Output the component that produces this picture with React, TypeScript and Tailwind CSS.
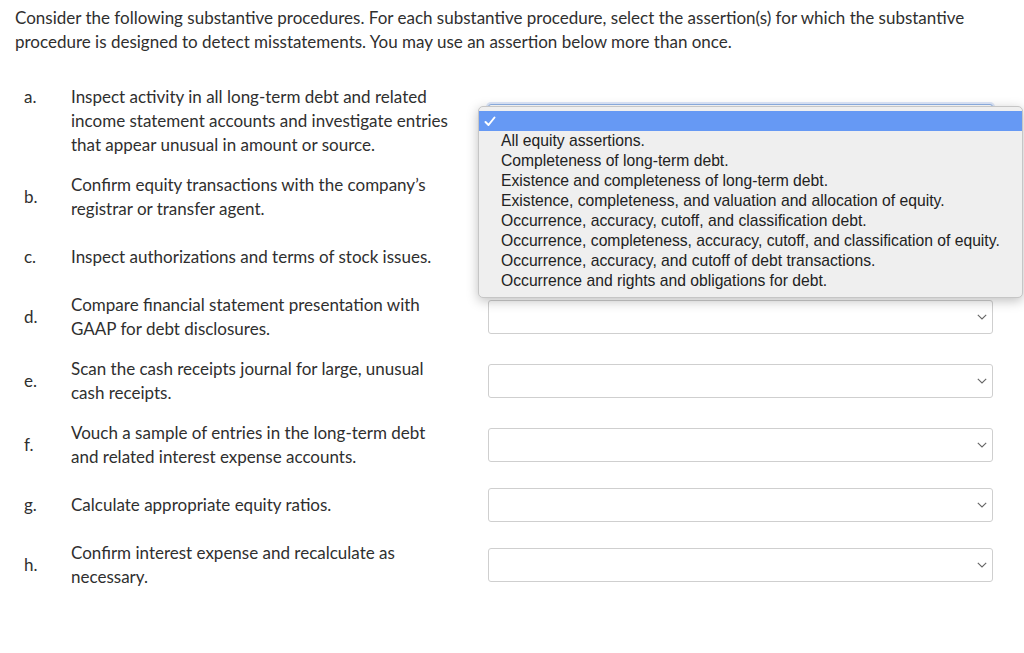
import React from 'react';

const rows = [
  { label: 'a.', text: 'Inspect activity in all long-term debt and related income statement accounts and investigate entries that appear unusual in amount or source.', top: true, focused: true },
  { label: 'b.', text: 'Confirm equity transactions with the company’s registrar or transfer agent.' },
  { label: 'c.', text: 'Inspect authorizations and terms of stock issues.' },
  { label: 'd.', text: 'Compare financial statement presentation with GAAP for debt disclosures.' },
  { label: 'e.', text: 'Scan the cash receipts journal for large, unusual cash receipts.' },
  { label: 'f.', text: 'Vouch a sample of entries in the long-term debt and related interest expense accounts.' },
  { label: 'g.', text: 'Calculate appropriate equity ratios.' },
  { label: 'h.', text: 'Confirm interest expense and recalculate as necessary.' },
];

const options = [
  'All equity assertions.',
  'Completeness of long-term debt.',
  'Existence and completeness of long-term debt.',
  'Existence, completeness, and valuation and allocation of equity.',
  'Occurrence, accuracy, cutoff, and classification debt.',
  'Occurrence, completeness, accuracy, cutoff, and classification of equity.',
  'Occurrence, accuracy, and cutoff of debt transactions.',
  'Occurrence and rights and obligations for debt.',
];

function SelectBox({ focused }: { focused?: boolean }) {
  return (
    <div className="h-10 flex items-center">
      <div
        className={
          focused
            ? 'w-[505px] h-[34px] bg-white rounded-[3px] border border-[#8fb2e6] shadow-[0_0_0_2px_rgba(120,160,230,0.25)] flex items-center justify-end pr-[5px]'
            : 'w-[505px] h-[34px] bg-white rounded-[3px] border border-[#cfcfcf] flex items-center justify-end pr-[5px]'
        }
      >
        <svg width="10" height="6" viewBox="0 0 10 6" fill="none">
          <polyline points="0.8,0.8 5,5 9.2,0.8" stroke="#666" strokeWidth="1.1" />
        </svg>
      </div>
    </div>
  );
}

export default function App() {
  return (
    <div className="relative w-[1024px] h-[653px] overflow-hidden bg-white text-[#2f2f2f] font-['Lato',sans-serif]">
      <p className="pl-[15px] pr-[20px] pt-[6px] text-[17px] leading-[24px]">
        Consider the following substantive procedures. For each substantive procedure, select the assertion(s) for which the substantive procedure is designed to detect misstatements. You may use an assertion below more than once.
      </p>

      <div className="mt-[23px]">
        {rows.map((r) => (
          <div key={r.label} className="flex items-center py-2 pl-[24px]">
            <div className={r.top ? 'w-[47px] self-start text-[17px] leading-[24px]' : 'w-[47px] text-[17px] leading-[24px]'}>
              {r.label}
            </div>
            <div className="w-[380px] text-[17px] leading-[24px]">{r.text}</div>
            <div className="ml-[37px]">
              <SelectBox focused={r.focused} />
            </div>
          </div>
        ))}
      </div>

      {/* open native dropdown */}
      <div className="absolute left-[478px] top-[106px] w-[545px] pt-[4px] pb-[6px] bg-[#efefef] border border-[#c6c6c6] rounded-[5px] shadow-[0_3px_12px_rgba(0,0,0,0.25)] font-['Liberation_Sans',Arial,sans-serif] text-[15.7px] text-[#222]">
        <div className="h-[20px] bg-[#6699f4] flex items-center pl-[5px]">
          <svg width="12" height="11" viewBox="0 0 12 11" fill="none">
            <path d="M1.5 6 L4.5 9 L10.5 1.5" stroke="white" strokeWidth="2" strokeLinecap="round" strokeLinejoin="round" />
          </svg>
        </div>
        {options.map((o) => (
          <div key={o} className="h-[20px] leading-[20px] pl-[22px]">
            {o}
          </div>
        ))}
      </div>
    </div>
  );
}
